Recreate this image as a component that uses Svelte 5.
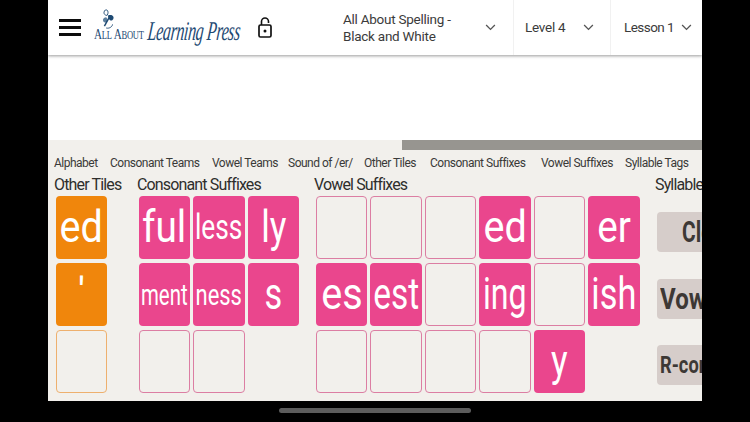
<script>
  const tabs = [
    ['Alphabet', 56],
    ['Consonant Teams', 102],
    ['Vowel Teams', 76],
    ['Sound of /er/', 76],
    ['Other Tiles', 66],
    ['Consonant Suffixes', 111],
    ['Vowel Suffixes', 84],
    ['Syllable Tags', 70]
  ]

  // null = empty slot, '' = gap with no tile
  const other = ['ed', "'", null]
  const consonant = ['ful', 'less', 'ly', 'ment', 'ness', 's', null, null, '']
  const vowel = [
    null, null, null, 'ed', null, 'er',
    'es', 'est', null, 'ing', null, 'ish',
    null, null, null, null, 'y', ''
  ]
  const syllables = [
    ['Closed', 'big'],
    ['Vowel Team', 'mid'],
    ['R-controlled', 'small']
  ]

  // font size and horizontal squeeze for each tile label
  const fit = {
    ed: [44, 0.9], ful: [44, 0.88], less: [35, 0.75], ly: [44, 0.8],
    ment: [30, 0.68], ness: [30, 0.73], s: [44, 0.78], es: [44, 0.9],
    est: [44, 0.76], er: [44, 0.88], ing: [44, 0.73], ish: [44, 0.78],
    y: [44, 0.8], "'": [40, 1]
  }
</script>

{#snippet chevron()}
  <svg class="chev" viewBox="0 0 12 8" width="11" height="7"><path d="M1 1.2 L6 6.2 L11 1.2" fill="none" stroke="#555" stroke-width="1.5" /></svg>
{/snippet}

{#snippet tile(t, kind)}
  {#if t === ''}
    <div></div>
  {:else if t === null}
    <div class="tile empty {kind}"></div>
  {:else}
    <div class="tile {kind}" class:tick={t === "'"}>
      <span style="font-size: {fit[t][0]}px; transform: scaleX({fit[t][1]})">{t}</span>
    </div>
  {/if}
{/snippet}

<div class="device">
  <main class="screen">
    <header>
      <div class="burger"><span></span><span></span><span></span></div>
      <div class="logo">
        <svg class="fly" viewBox="0 0 20 24" width="18" height="22">
          <path d="M7 2 C10 1 11 5 9 8 C6 8 4 5 7 2 Z" fill="#fff" stroke="#1e4a73" stroke-width="1" />
          <path d="M10 8 C15 6 18 10 15 13 C13 15 10 12 10 8 Z" fill="#1e4a73" />
          <path d="M8 10 C4 10 3 15 7 16 C10 17 10 12 8 10 Z" fill="#5d7f9e" />
          <path d="M6 20 L12 9" stroke="#1e4a73" stroke-width="1.6" />
          <path d="M8 22 C12 23 15 20 15 18" fill="none" stroke="#1e4a73" stroke-width="1" />
        </svg>
        <span class="all">A<small>LL</small> A<small>BOUT</small></span>
        <span class="script">Learning Press</span>
      </div>
      <svg class="lock" viewBox="0 0 14 21" width="14" height="21">
        <path d="M3.5 8 V4.5 A3.5 3.5 0 0 1 10.5 4.5 V6" fill="none" stroke="#111" stroke-width="1.6" />
        <rect x="1" y="8" width="12" height="12" rx="1.5" fill="none" stroke="#111" stroke-width="1.7" />
        <circle cx="7" cy="14" r="1.5" fill="#111" />
      </svg>
      <div class="menus">
        <div class="menu first"><span>All About Spelling -<br />Black and White</span>{@render chevron()}</div>
        <div class="menu second"><span>Level 4</span>{@render chevron()}</div>
        <div class="menu third"><span>Lesson 1</span>{@render chevron()}</div>
      </div>
    </header>

    <div class="blank"></div>

    <section class="panel">
      <div class="scrollbar"></div>
      <nav>
        {#each tabs as [label, w]}
          <span style="width: {w}px">{label}</span>
        {/each}
      </nav>
      <div class="board">
        <div class="group g-other">
          <h2>Other Tiles</h2>
          <div class="grid one">
            {#each other as t}{@render tile(t, 'orange')}{/each}
          </div>
        </div>
        <div class="group g-cons">
          <h2>Consonant Suffixes</h2>
          <div class="grid three">
            {#each consonant as t}{@render tile(t, 'pink')}{/each}
          </div>
        </div>
        <div class="group g-vowel">
          <h2>Vowel Suffixes</h2>
          <div class="grid six">
            {#each vowel as t}{@render tile(t, 'pink')}{/each}
          </div>
        </div>
        <div class="group g-syll">
          <h2>Syllable Tags</h2>
          <div class="tags">
            {#each syllables as [label, size]}
              <div class="tag {size}"><span>{label}</span></div>
            {/each}
          </div>
        </div>
      </div>
    </section>
  </main>
  <div class="home"></div>
</div>

<style>
  :global(body) {
    margin: 0;
    background: #000;
  }

  .device {
    width: 750px;
    height: 422px;
    background: #000;
    padding-left: 48px;
    box-sizing: border-box;
    display: flex;
    flex-direction: column;
    overflow: hidden;
    font-family: Roboto, "Liberation Sans", sans-serif;
  }

  .screen {
    width: 654px;
    height: 401px;
    flex: none;
    display: flex;
    flex-direction: column;
    background: #fff;
    overflow: hidden;
  }

  header {
    height: 55px;
    flex: none;
    display: flex;
    align-items: center;
    background: #fff;
    box-shadow: 0 1px 3px rgba(0, 0, 0, 0.4);
    position: relative;
    z-index: 1;
  }

  .burger {
    width: 22px;
    margin-left: 11px;
    display: flex;
    flex-direction: column;
    gap: 4px;
    flex: none;
  }

  .burger span {
    height: 3px;
    background: #0c0c0c;
  }

  .logo {
    position: relative;
    width: 147px;
    height: 40px;
    margin-left: 13px;
    flex: none;
    color: #1e4a73;
  }

  .fly {
    position: absolute;
    left: 5px;
    top: 0;
  }

  .all {
    position: absolute;
    left: 0;
    top: 18px;
    font: 15px/16px "Liberation Serif", serif;
    letter-spacing: -0.3px;
    white-space: nowrap;
    transform-origin: left center;
    transform: scaleX(0.74);
  }

  .all small {
    font-size: 11.5px;
  }

  .script {
    position: absolute;
    left: 54px;
    top: 9px;
    font: italic 27px/28px "Liberation Serif", serif;
    letter-spacing: -0.6px;
    white-space: nowrap;
    transform-origin: left center;
    transform: scaleX(0.59) skewX(-10deg);
  }

  .lock {
    margin-left: 17px;
    flex: none;
  }

  .menus {
    margin-left: auto;
    display: flex;
    height: 100%;
  }

  .menu {
    display: flex;
    align-items: center;
    justify-content: space-between;
    box-sizing: border-box;
    height: 100%;
    border-left: 1px solid #f1f1f1;
    font-size: 13.5px;
    line-height: 17px;
    color: #3b3b3b;
    letter-spacing: -0.25px;
  }

  .menu.first {
    width: 181px;
    padding: 0 17px 0 11px;
    border-left: 0;
  }

  .menu.second {
    width: 97px;
    padding: 0 16px 0 11px;
  }

  .menu.third {
    width: 92px;
    padding: 0 10px 0 13px;
    letter-spacing: -0.55px;
  }

  .blank {
    height: 85px;
    flex: none;
  }

  .panel {
    flex: 1;
    background: #f2f0ec;
    display: flex;
    flex-direction: column;
    min-height: 0;
  }

  .scrollbar {
    width: 300px;
    height: 10px;
    margin-left: auto;
    flex: none;
    background: #979590;
  }

  nav {
    display: flex;
    height: 24px;
    padding: 1px 0 0 6px;
    box-sizing: content-box;
    align-items: center;
    flex: none;
    font-size: 12px;
    color: #3a3a38;
    letter-spacing: -0.5px;
    white-space: nowrap;
  }

  nav span {
    flex: none;
  }

  .board {
    display: flex;
    align-items: flex-start;
  }

  .group {
    flex: none;
  }

  .g-other {
    margin-left: 6px;
    width: 83px;
  }

  .g-cons {
    width: 177px;
  }

  .g-vowel {
    width: 341px;
  }

  .g-syll {
    width: 120px;
  }

  h2 {
    margin: 0;
    height: 21px;
    font-size: 16px;
    line-height: 20px;
    font-weight: 400;
    color: #2e2e2c;
    letter-spacing: -0.85px;
    white-space: nowrap;
  }

  .grid {
    display: grid;
    grid-template-rows: repeat(3, 62.5px);
    row-gap: 4.5px;
    column-gap: 3px;
    margin-left: 1.8px;
  }

  .one {
    grid-template-columns: 51.5px;
  }

  .three {
    grid-template-columns: repeat(3, 51.5px);
  }

  .six {
    grid-template-columns: repeat(6, 51.5px);
  }

  .tile {
    display: flex;
    align-items: center;
    justify-content: center;
    box-sizing: border-box;
    border-radius: 4px;
    color: #fff;
    white-space: nowrap;
  }

  .tile span {
    display: block;
  }

  .tile.tick {
    align-items: flex-start;
    line-height: 36px;
    padding-top: 12px;
  }

  .pink {
    background: #ea468d;
  }

  .orange {
    background: #f0860c;
  }

  .empty {
    background: transparent;
  }

  .empty.pink {
    border: 1px solid #dc7ea3;
  }

  .empty.orange {
    border: 1px solid #eeb06e;
  }

  .tags {
    display: flex;
    flex-direction: column;
    gap: 26.5px;
    padding: 16px 0 0 2px;
  }

  .tag {
    width: 110px;
    height: 40px;
    border-radius: 4px;
    background: #d6cdca;
    color: #3d3835;
    font-weight: 700;
    display: flex;
    align-items: center;
    white-space: nowrap;
  }

  .tag span {
    transform-origin: left center;
  }

  .tag.big {
    font-size: 29px;
    padding-left: 25px;
  }

  .tag.big span {
    transform: scaleX(0.72);
  }

  .tag.mid {
    font-size: 30px;
    padding-left: 3px;
  }

  .tag.mid span {
    transform: scaleX(0.8);
  }

  .tag.small {
    font-size: 24px;
    padding-left: 3px;
  }

  .tag.small span {
    transform: scaleX(0.76);
  }

  .home {
    width: 192px;
    height: 5px;
    margin: 7px 0 0 231px;
    border-radius: 3px;
    background: #5c5c5c;
    flex: none;
  }
</style>
